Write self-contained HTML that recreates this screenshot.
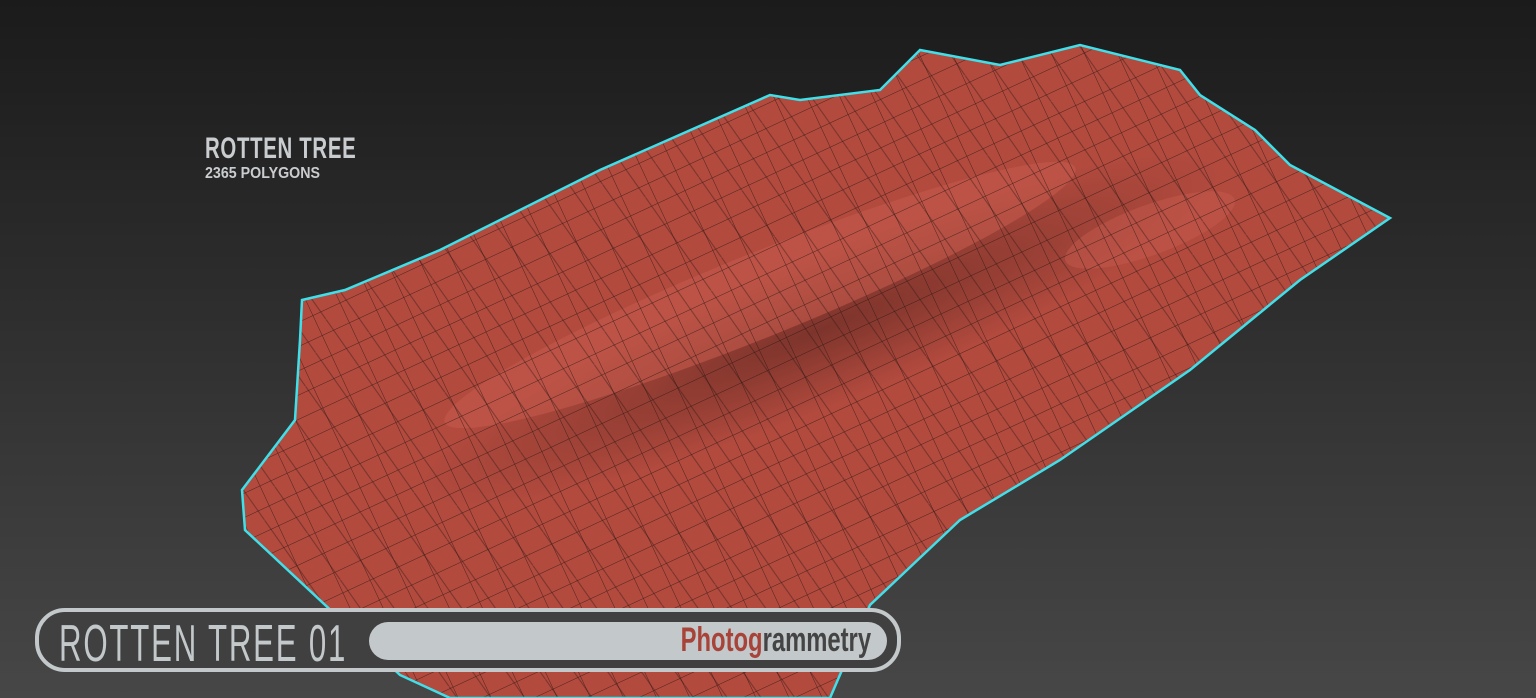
<!DOCTYPE html><html><head><style>
body{margin:0;width:1536px;height:698px;overflow:hidden;background:linear-gradient(180deg,#1b1b1b 0%,#2c2c2c 40%,#474747 100%);font-family:"Liberation Sans Narrow","Liberation Sans",sans-serif;position:relative}
.t1{position:absolute;left:205px;top:132px;color:#c9cdd0;font-size:30px;font-weight:bold;letter-spacing:1px;transform:scaleX(.68);transform-origin:left;white-space:nowrap}
.t2{position:absolute;left:205px;top:165px;color:#c9cdd0;font-size:16px;font-weight:bold;transform:scaleX(.89);transform-origin:left;white-space:nowrap}
.ban{position:absolute;left:35px;top:608px;width:858px;height:56px;border:4px solid #c3c8ca;border-radius:30px;background:#404040}
.ban .a{position:absolute;left:20px;top:2px;font-size:52px;color:#c3c8ca;transform:scaleX(.6);transform-origin:left;letter-spacing:3px;white-space:nowrap}
.ban .b{position:absolute;left:330px;top:10px;width:518px;height:38px;border-radius:20px;background:#c3c8ca}
.ban .c{position:absolute;right:16px;top:-1px;font-size:34px;color:#444;font-weight:bold;transform:scaleX(.7);transform-origin:right;white-space:nowrap}
</style></head><body>
<svg width="1536" height="698" style="position:absolute;left:0;top:0">
<defs>
<clipPath id="cp"><polygon points="302,300 345,290 440,250 600,170 770,95 800,100 880,90 920,50 1000,65 1080,45 1180,70 1200,95 1255,130 1290,165 1390,218 1300,280 1190,370 1060,460 960,520 870,605 830,698 450,698 400,675 245,530 242,490 295,420 300,340"/></clipPath>
<pattern id="w" width="30" height="22" patternUnits="userSpaceOnUse" patternTransform="rotate(-25)"><path d="M0 0H30M0 0V22" stroke="#2a1512" stroke-width="1" fill="none" opacity=".75"/></pattern>
<pattern id="w2" width="45" height="35" patternUnits="userSpaceOnUse" patternTransform="rotate(17)"><path d="M0 0L45 35" stroke="#2a1512" stroke-width="1" fill="none" opacity=".45"/></pattern>
<radialGradient id="sh"><stop offset="0" stop-color="#000" stop-opacity=".3"/><stop offset="1" stop-color="#000" stop-opacity="0"/></radialGradient>
</defs>
<g clip-path="url(#cp)">
<rect width="1536" height="698" fill="#b24a3e"/>
<ellipse cx="820" cy="330" rx="430" ry="75" transform="rotate(-22 820 330)" fill="url(#sh)"/>
<ellipse cx="760" cy="295" rx="340" ry="42" transform="rotate(-22 760 295)" fill="#c55a4d" opacity=".6"/>
<ellipse cx="1150" cy="230" rx="90" ry="25" transform="rotate(-20 1150 230)" fill="#c55a4d" opacity=".5"/>
<rect width="1536" height="698" fill="url(#w)"/>
<rect width="1536" height="698" fill="url(#w2)"/>
</g>
<polygon points="302,300 345,290 440,250 600,170 770,95 800,100 880,90 920,50 1000,65 1080,45 1180,70 1200,95 1255,130 1290,165 1390,218 1300,280 1190,370 1060,460 960,520 870,605 830,698 450,698 400,675 245,530 242,490 295,420 300,340" fill="none" stroke="#3fe0ea" stroke-width="2.5"/>
</svg>
<div class="t1">ROTTEN TREE</div>
<div class="t2">2365 POLYGONS</div>
<div class="ban"><div class="a">ROTTEN TREE 01</div><div class="b"><div class="c"><span style="color:#a8433a">Photog</span>rammetry</div></div></div>
</body></html>
